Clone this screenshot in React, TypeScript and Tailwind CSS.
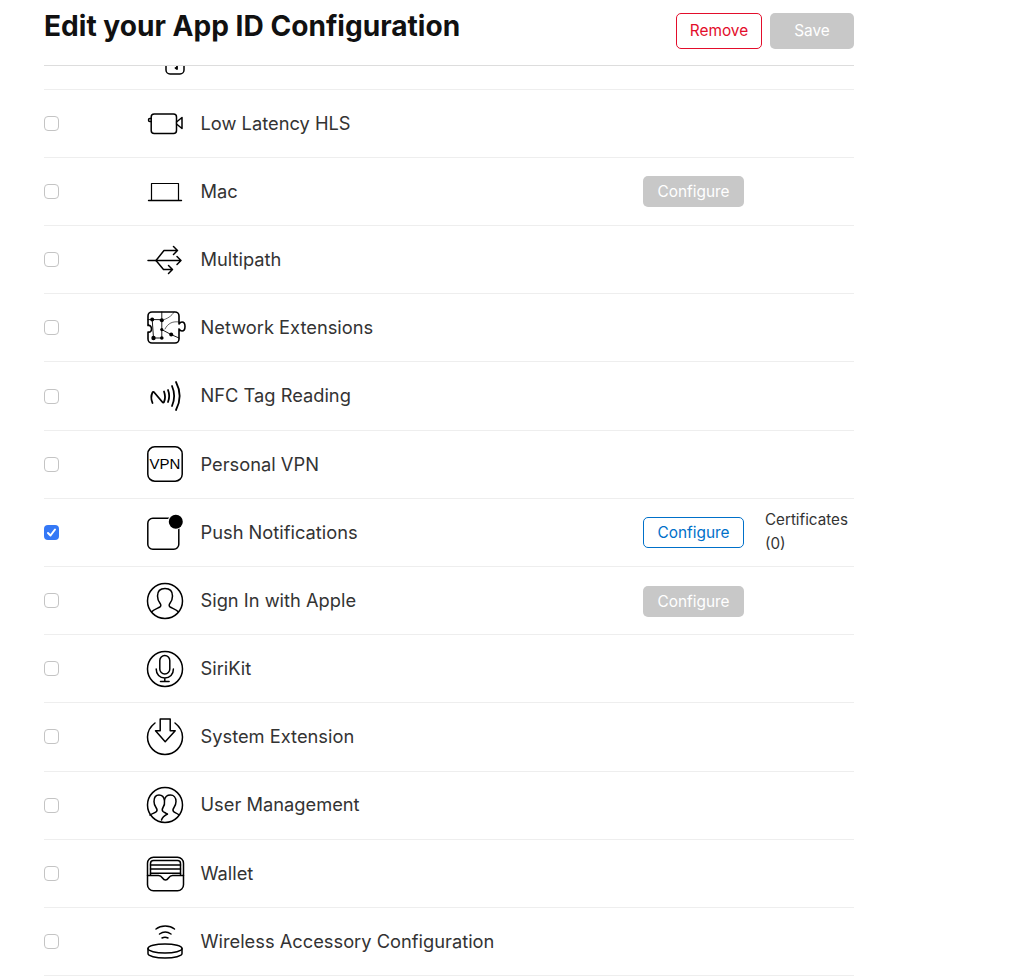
import type { ReactNode } from 'react'

type Capability = {
  name: string
  icon: ReactNode
  checked?: boolean
  configure?: 'disabled' | 'active'
  note?: string
}

function Icon({ children }: { children: ReactNode }) {
  return (
    <svg
      viewBox="0 0 36 36"
      className="w-9 h-9 overflow-visible text-black"
      fill="none"
      stroke="currentColor"
      strokeWidth="1.5"
      strokeLinecap="round"
      strokeLinejoin="round"
    >
      {children}
    </svg>
  )
}

const capabilities: Capability[] = [
  {
    name: 'Low Latency HLS',
    icon: (
      <Icon>
        <rect x="4.2" y="9" width="25.3" height="19.5" rx="3" />
        <path d="M4.2 13.5H2.8c-1 0-1.3.6-1.3 1.400s.3 1.600 1.300 1.600h1.400" />
        <path d="M29.5 17l5.500-4.500v11l-5.500-4.500" />
      </Icon>
    ),
  },
  {
    name: 'Mac',
    icon: (
      <Icon>
        <path d="M4.5 27V10.5h27V27" strokeWidth="1.2" />
        <path d="M1.5 27.5h33" strokeWidth="1.4" />
      </Icon>
    ),
    configure: 'disabled',
  },
  {
    name: 'Multipath',
    icon: (
      <Icon>
        <path d="M1 18.5h33M30 14.5l4 4-4 4" />
        <path d="M9 18.5L17 8.5h13.5M26.500 4.500l4 4-4 4" />
        <path d="M9 18.500l7.500 9H25M21.500 23.500l4 4-4 4" />
      </Icon>
    ),
  },
  {
    name: 'Network Extensions',
    icon: (
      <Icon>
        <path d="M5 2h23a4 4 0 0 1 4 4v8c1-1.500 2-2 3-2 2 0 3 2 3 4.500S37 21 35 21c-1 0-2-.5-3-2v10a4 4 0 0 1-4 4H5a4 4 0 0 1-4-4v-7c2 .5 3.500-.5 3.500-3S3 15 1 15.500V6a4 4 0 0 1 4-4z" strokeWidth="1.6" />
        <g strokeWidth="0.9">
          <path d="M1 9.600h14M14.800 2v26M5.200 9.600L6.500 28M6.500 28h8.300M14.800 19.600l9.400 5M24.200 24.600L32 28" />
          <path d="M14.800 10.300C20 9 25 6 27 2M18 19c3-6 8-8 14-7" strokeWidth="0.6" />
        </g>
        <g fill="currentColor" stroke="none">
          <circle cx="5.200" cy="9.600" r="2" />
          <circle cx="14.800" cy="10.300" r="2" />
          <circle cx="14.800" cy="19.600" r="1.600" />
          <circle cx="24.200" cy="24.600" r="2" />
          <circle cx="6.500" cy="28" r="2.200" />
          <circle cx="14.800" cy="28" r="1.800" />
        </g>
      </Icon>
    ),
  },
  {
    name: 'NFC Tag Reading',
    icon: (
      <Icon>
        <g strokeWidth="1.800">
          <path d="M5.500 25c-1.500-3.500-1.500-7.500 0-10.500.4-.8 1.200-.8 1.800 0l8 9.500c.6.700 1.300.7 1.700 0 1.300-3 1.300-7 0-10.500" />
          <path d="M21 12c1.600 4 1.600 8 0 12" />
          <path d="M25 8c2.800 6.500 2.800 13.500 0 20" />
          <path d="M29 4c4.700 9 4.700 19 0 28" />
        </g>
      </Icon>
    ),
  },
  {
    name: 'Personal VPN',
    icon: (
      <Icon>
        <rect x="0.800" y="0.800" width="34.400" height="34.400" rx="7" />
        <text
          x="18"
          y="23.300"
          textAnchor="middle"
          fill="currentColor"
          stroke="none"
          fontSize="15"
          fontFamily="'Liberation Sans', sans-serif"
        >
          VPN
        </text>
      </Icon>
    ),
  },
  {
    name: 'Push Notifications',
    icon: (
      <Icon>
        <rect x="0.800" y="4.300" width="31" height="31" rx="5" />
        <circle cx="28.800" cy="7.700" r="8" fill="white" stroke="none" />
        <circle cx="28.800" cy="7.700" r="7" fill="currentColor" stroke="none" />
      </Icon>
    ),
    checked: true,
    configure: 'active',
    note: 'Certificates (0)',
  },
  {
    name: 'Sign In with Apple',
    icon: (
      <Icon>
        <circle cx="18" cy="18" r="17.500" />
        <path d="M4.500 29c2-2.500 6-3.500 8.500-5 1.200-.8 1-2.500 0-3.800-1.500-1.900-2.500-4.200-2.500-7.200 0-4.800 3-7.500 7.500-7.500s7.500 2.700 7.500 7.500c0 3-1 5.300-2.500 7.200-1 1.300-1.200 3 0 3.800 2.500 1.500 6.500 2.500 8.500 5" />
      </Icon>
    ),
    configure: 'disabled',
  },
  {
    name: 'SiriKit',
    icon: (
      <Icon>
        <circle cx="18" cy="18" r="17.500" />
        <rect x="12.800" y="4.500" width="10" height="18.500" rx="5" />
        <path d="M9.200 18c0 5.500 3.500 9 8.600 9s8.600-3.500 8.600-9M17.800 27v3.500M13.500 30.500h8.600" />
      </Icon>
    ),
  },
  {
    name: 'System Extension',
    icon: (
      <Icon>
        <path d="M8 4C3.500 7.500.500 12 .500 18c0 9.700 7.800 17.500 17.500 17.500S35.500 27.700 35.500 18c0-6-3-10.500-7.500-14" />
        <path d="M13.200 0h10v11.700h5L18.200 22.700 8.500 11.700h4.700z" />
      </Icon>
    ),
  },
  {
    name: 'User Management',
    icon: (
      <Icon>
        <circle cx="18" cy="18" r="17.500" />
        <path d="M3 28c2-1.500 5-2 6.500-3.500 1-1 .5-2.500-.5-4-1.300-1.800-2-3.800-2-6C7 10.500 9 8 12 8s5 2 5.500 5.500c.4 3-.5 5.500-1.500 7-.8 1.300-1 3 0 4 1 .8 3 1.500 4 2.500" />
        <path d="M17.500 13c.5-3 3-5 6-5s5.500 2.500 5.500 6.500c0 2.200-.7 4.200-2 6-1 1.500-1.500 3-.5 4s3 1.500 5 3M20.500 27c-2 1-5 2.500-6 6" />
      </Icon>
    ),
  },
  {
    name: 'Wallet',
    icon: (
      <Icon>
        <rect x="0.500" y="2.300" width="36" height="33.400" rx="6" />
        <path d="M3.500 20V8.500a3 3 0 0 1 3-3h24a3 3 0 0 1 3 3V20" />
        <path d="M3.500 10h30M3.500 14h30M3.500 18.300h30" />
        <path d="M.500 20.500h11c2 0 3 1 4 2.500s2 2 3 2 2-.5 3-2 2-2.500 4-2.500h11" />
      </Icon>
    ),
  },
  {
    name: 'Wireless Accessory Configuration',
    icon: (
      <Icon>
        <ellipse cx="18" cy="24.500" rx="17" ry="4.500" />
        <path d="M1 24.500v5c0 2.500 7.500 4.500 17 4.500s17-2 17-4.500v-5" />
        <path d="M9 5c5-4 13.500-4 18.500 0M12.500 10c3.500-2.500 8-2.500 11.500 0M15 14c2-1 4-1 6 0" />
      </Icon>
    ),
  },
]

function Checkbox({ checked }: { checked?: boolean }) {
  if (checked) {
    return (
      <span className="w-[15px] h-[15px] rounded-[4px] bg-[#3478f6] flex items-center justify-center">
        <svg viewBox="0 0 15 15" className="w-[15px] h-[15px]" fill="none" stroke="white" strokeWidth="2" strokeLinecap="round" strokeLinejoin="round">
          <path d="M4 8l2.500 2.500L11 4.500" />
        </svg>
      </span>
    )
  }
  return <span className="w-[15px] h-[15px] rounded-[4px] border border-[#c4c4c4] bg-white" />
}

function Row({ cap }: { cap: Capability }) {
  return (
    <div className="h-[68.2px] shrink-0 flex items-center border-b border-[#eeeeee] text-[18.3px] text-[#333333]">
      <div className="w-[103px] shrink-0 flex items-center">
        <Checkbox checked={cap.checked} />
      </div>
      <div className="w-9 shrink-0 flex items-center">{cap.icon}</div>
      <div className="w-[460px] shrink-0 pl-[17.5px]">{cap.name}</div>
      <div className="w-[122px] shrink-0 pt-px">
        {cap.configure === 'disabled' && (
          <button className="w-[101px] h-[31px] rounded-[5px] bg-[#c8c8c8] text-white text-[15.4px]">Configure</button>
        )}
        {cap.configure === 'active' && (
          <button className="w-[101px] h-[31px] rounded-[5px] border-[1.5px] border-[#0070c9] bg-white text-[#0070c9] text-[15.4px]">Configure</button>
        )}
      </div>
      {cap.note && <div className="w-[89px] text-[15.2px] leading-[24px] text-[#333333]">{cap.note}</div>}
    </div>
  )
}

export default function App() {
  return (
    <div className="h-[980px] bg-white overflow-hidden pl-[44px] font-['Inter','Liberation_Sans',sans-serif]">
      <div className="w-[810px]">
        {/* Header */}
        <header className="h-[66px] flex justify-between border-b-[1.5px] border-[#dddddd]">
          <h1 className="text-[28.1px] font-bold leading-[53px] text-[#111111]">Edit your App ID Configuration</h1>
          <div className="flex gap-2 pt-[13px]">
            <button className="w-[86px] h-[36px] rounded-[5px] border-[1.5px] border-[#e30d2b] text-[#e30d2b] text-[15.4px]">Remove</button>
            <button className="w-[84px] h-[36px] rounded-[5px] bg-[#c8c8c8] text-white text-[15.4px]">Save</button>
          </div>
        </header>

        {/* Capabilities list, scrolled under the header */}
        <div className="h-[914px] overflow-hidden">
          <div className="flex flex-col -mt-[44.5px]">
            <div className="h-[68.2px] shrink-0 flex items-center border-b border-[#eeeeee]">
              <div className="w-[103px] shrink-0" />
              <Icon>
                <rect x="19" y="10" width="18" height="27" rx="4" />
                <path d="M30 29.500v2.500l-1.500-1" strokeWidth="1.800" />
              </Icon>
            </div>
            {capabilities.map(cap => (
              <Row key={cap.name} cap={cap} />
            ))}
          </div>
        </div>
      </div>
    </div>
  )
}
